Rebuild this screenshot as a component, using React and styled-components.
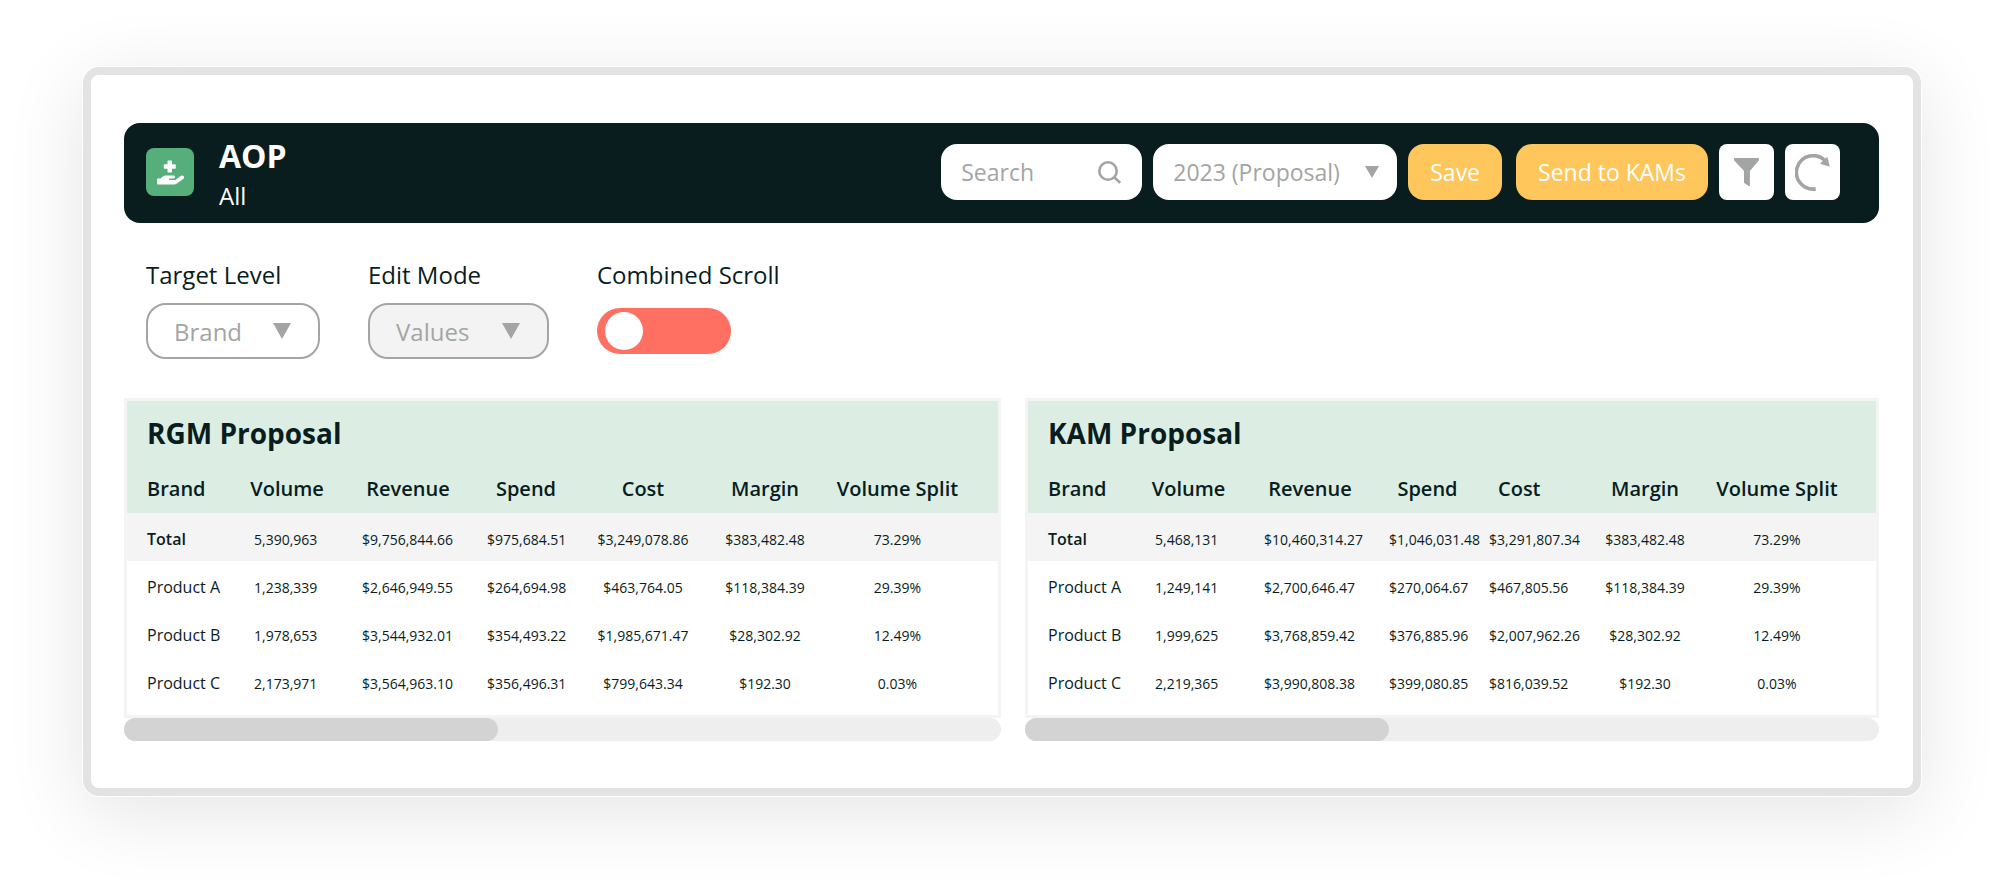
import React from "react";
import styled, { createGlobalStyle } from "styled-components";
import { FaHandHoldingMedical } from "react-icons/fa";

const GlobalStyle = createGlobalStyle`
  * {
    box-sizing: border-box;
  }

  body {
    margin: 0;
    background: #fff;
    color: #091d1e;
    font-family: "Open Sans", "Noto Sans", sans-serif;
  }

  button, input, select {
    font: inherit;
  }
`;

const Page = styled.div`
  padding: 67px 79px 95px 83px;
`;

const Frame = styled.main`
  padding: 48px 34px 47px 33px;
  border: 8px solid #e3e3e3;
  border-radius: 16px;
  background: #fff;
  box-shadow: 0 0 0 1px #fff, 0 16px 80px rgba(0, 0, 0, 0.11);
`;

const Header = styled.header`
  display: flex;
  align-items: center;
  height: 100px;
  padding: 0 39px 2px 22px;
  border-radius: 16px;
  background: #091d1e;
`;

const Logo = styled.div`
  display: grid;
  place-items: center;
  width: 48px;
  height: 48px;
  margin-right: 25px;
  border-radius: 8px;
  background: #56ae7b;
  color: #fff;
  font-size: 27px;
`;

const Heading = styled.div`
  margin-right: auto;
  padding-top: 6px;
  color: #fff;
`;

const Title = styled.h1`
  margin: 0;
  font-size: 32px;
  font-weight: 700;
  line-height: 42px;
`;

const Subtitle = styled.p`
  margin: 0;
  font-size: 24px;
  line-height: 38px;
`;

const Actions = styled.div`
  display: flex;
  align-items: center;
  gap: 11px;
`;

const SearchBox = styled.label`
  display: flex;
  align-items: center;
  width: 201px;
  height: 56px;
  padding: 0 21px 0 20px;
  border-radius: 16px;
  background: #fff;
  color: #a3a5a4;
`;

const SearchInput = styled.input`
  flex: 1;
  min-width: 0;
  padding: 0;
  border: 0;
  outline: 0;
  background: none;
  color: #a3a5a4;
  font-size: 23px;

  &::placeholder {
    color: #a3a5a4;
    opacity: 1;
  }
`;

const SelectBox = styled.div`
  display: grid;
  align-items: center;
  width: ${(props) => props.$width}px;
  height: 56px;
  color: #a3a5a4;

  > * {
    grid-area: 1 / 1;
  }

  svg {
    justify-self: end;
    margin-right: ${(props) => props.$arrowGap}px;
    pointer-events: none;
  }
`;

const Select = styled.select`
  appearance: none;
  width: 100%;
  height: 100%;
  padding: 0 0 0 ${(props) => (props.$outlined ? 26 : 20)}px;
  border: ${(props) => (props.$outlined ? "2px solid #a3a5a4" : "0")};
  border-radius: ${(props) => (props.$outlined ? 20 : 16)}px;
  background: ${(props) => (props.$filled ? "#f3f3f3" : "#fff")};
  color: #a3a5a4;
  font-size: ${(props) => (props.$outlined ? 24 : 23)}px;
`;

const Button = styled.button`
  height: 56px;
  padding: 0 22px;
  border: 0;
  border-radius: 16px;
  background: #fec65b;
  color: #fff;
  font-size: 23px;

  & + & {
    margin-left: 3px;
  }
`;

const IconButton = styled.button`
  display: grid;
  place-items: center;
  width: 55px;
  height: 56px;
  padding: 0;
  border: 0;
  border-radius: 8px;
  background: #fff;
  color: #a3a5a4;
`;

const Filters = styled.section`
  display: flex;
  gap: 48px;
  padding: 34px 22px 39px;
`;

const Field = styled.div`
  display: flex;
  flex-direction: column;
  gap: 10px;
`;

const FieldLabel = styled.label`
  font-size: 24px;
  line-height: 36px;
`;

const Toggle = styled.input`
  appearance: none;
  display: flex;
  align-items: center;
  width: 134px;
  height: 46px;
  margin: 5px 0;
  padding: 0 8px;
  border-radius: 23px;
  background: #ff7063;

  &::before {
    content: "";
    width: 38px;
    height: 38px;
    border-radius: 50%;
    background: #fff;
  }

  &:checked {
    justify-content: flex-end;
  }
`;

const Panels = styled.div`
  display: grid;
  grid-template-columns: 877fr 854fr;
  gap: 24px;
`;

const Card = styled.div`
  border: 3px solid #f4f4f4;
  background: #fff;
`;

const CardTitle = styled.h2`
  margin: 0;
  padding: 13px 20px 1px;
  background: #dceee3;
  font-size: 28px;
  font-weight: 700;
  line-height: 38px;
`;

const Table = styled.table`
  width: 100%;
  table-layout: fixed;
  border-collapse: collapse;
  margin-bottom: 10px;
  white-space: nowrap;
`;

const HeadCell = styled.th`
  height: 60px;
  padding: 10px ${(props) => props.$end || 0}px 0 ${(props) => props.$start || 0}px;
  background: #dceee3;
  font-size: 20px;
  font-weight: 600;
  text-align: ${(props) => (props.$start ? "left" : "center")};
`;

const Row = styled.tr`
  height: 48px;
  background: ${(props) => (props.$total ? "#f4f4f4" : "#fff")};
`;

const RowName = styled.th`
  padding: 3px 0 0 20px;
  font-size: 16px;
  font-weight: ${(props) => (props.$total ? 600 : 400)};
  text-align: left;
`;

const Cell = styled.td`
  padding: 5px ${(props) => props.$end || 0}px 0 ${(props) => props.$start || 0}px;
  font-size: 14px;
  text-align: ${(props) => (props.$start ? "left" : "center")};
`;

const ScrollTrack = styled.div`
  height: 23px;
  border-radius: 12px;
  background: #eee;
`;

const ScrollThumb = styled.div`
  height: 100%;
  border-radius: 12px;
  background: #d3d3d3;
`;

const Arrow = ({ size }) => (
  <svg width={size} height={size - 2} viewBox="0 0 18 16" preserveAspectRatio="none" aria-hidden="true">
    <path d="M0 0h18L9 16z" fill="currentColor" />
  </svg>
);

const SearchIcon = () => (
  <svg width="23" height="23" viewBox="0 0 23 23" fill="none" stroke="currentColor" strokeWidth="2.6" aria-hidden="true">
    <circle cx="10" cy="10" r="8.700" />
    <path d="M16.200 16.200l6 5.600" />
  </svg>
);

const FunnelIcon = () => (
  <svg width="25" height="28" viewBox="0 0 25 28" fill="currentColor" aria-hidden="true">
    <path d="M.8 0h23.400q.8 0 .8.800v1.400L15.900 13v15h-1.200L10 24.800V13L0 2.200V.8Q0 0 .8 0z" />
  </svg>
);

const RefreshIcon = () => (
  <svg width="35" height="37" viewBox="0 0 35 37" fill="none" aria-hidden="true">
    <path d="M20.700 34.900A16.700 16.700 0 1 1 30.200 6.800" stroke="currentColor" strokeWidth="3.600" />
    <path d="M32.300 2.800l2.500 10-9.800-3z" fill="currentColor" />
  </svg>
);

// start = left inset of the values, headStart = left inset of the column name
const rgm = {
  title: "RGM Proposal",
  scroll: 374 / 877,
  columns: [
    { label: "Brand", width: 100, headStart: 20 },
    { label: "Volume", width: 120, start: 27 },
    { label: "Revenue", width: 122, start: 15 },
    { label: "Spend", width: 114, start: 18 },
    { label: "Cost", width: 120 },
    { label: "Margin", width: 124 },
    { label: "Volume Split", width: 171, end: 30 },
  ],
  rows: [
    ["Total", "5,390,963", "$9,756,844.66", "$975,684.51", "$3,249,078.86", "$383,482.48", "73.29%"],
    ["Product A", "1,238,339", "$2,646,949.55", "$264,694.98", "$463,764.05", "$118,384.39", "29.39%"],
    ["Product B", "1,978,653", "$3,544,932.01", "$354,493.22", "$1,985,671.47", "$28,302.92", "12.49%"],
    ["Product C", "2,173,971", "$3,564,963.10", "$356,496.31", "$799,643.34", "$192.30", "0.03%"],
  ],
};

const kam = {
  title: "KAM Proposal",
  scroll: 364 / 854,
  columns: [
    { label: "Brand", width: 100, headStart: 20 },
    { label: "Volume", width: 121, start: 27 },
    { label: "Revenue", width: 122, start: 15 },
    { label: "Spend", width: 113, start: 18 },
    { label: "Cost", width: 104, start: 5, headStart: 14 },
    { label: "Margin", width: 114 },
    { label: "Volume Split", width: 174, end: 24 },
  ],
  rows: [
    ["Total", "5,468,131", "$10,460,314.27", "$1,046,031.48", "$3,291,807.34", "$383,482.48", "73.29%"],
    ["Product A", "1,249,141", "$2,700,646.47", "$270,064.67", "$467,805.56", "$118,384.39", "29.39%"],
    ["Product B", "1,999,625", "$3,768,859.42", "$376,885.96", "$2,007,962.26", "$28,302.92", "12.49%"],
    ["Product C", "2,219,365", "$3,990,808.38", "$399,080.85", "$816,039.52", "$192.30", "0.03%"],
  ],
};

const ProposalPanel = ({ title, columns, rows, scroll }) => (
  <section>
    <Card>
      <CardTitle>{title}</CardTitle>
      <Table aria-label={title}>
        <colgroup>
          {columns.map((col) => (
            <col key={col.label} width={col.width} />
          ))}
        </colgroup>
        <thead>
          <tr>
            {columns.map((col) => (
              <HeadCell key={col.label} scope="col" $start={col.headStart} $end={col.end}>
                {col.label}
              </HeadCell>
            ))}
          </tr>
        </thead>
        <tbody>
          {rows.map(([name, ...values], index) => (
            <Row key={name} $total={index === 0}>
              <RowName scope="row" $total={index === 0}>
                {name}
              </RowName>
              {values.map((value, i) => (
                <Cell key={columns[i + 1].label} $start={columns[i + 1].start} $end={columns[i + 1].end}>
                  {value}
                </Cell>
              ))}
            </Row>
          ))}
        </tbody>
      </Table>
    </Card>
    <ScrollTrack>
      <ScrollThumb style={{ width: `${scroll * 100}%` }} />
    </ScrollTrack>
  </section>
);

const App = () => {
  return (
    <Page>
      <GlobalStyle />
      <Frame>
        <Header>
          <Logo>
            <FaHandHoldingMedical />
          </Logo>
          <Heading>
            <Title>AOP</Title>
            <Subtitle>All</Subtitle>
          </Heading>
          <Actions>
            <SearchBox>
              <SearchInput type="text" placeholder="Search" aria-label="Search" />
              <SearchIcon />
            </SearchBox>
            <SelectBox $width={244} $arrowGap={18}>
              <Select aria-label="Plan">
                <option>2023 (Proposal)</option>
              </Select>
              <Arrow size={14} />
            </SelectBox>
            <Button type="button">Save</Button>
            <Button type="button">Send to KAMs</Button>
            <IconButton type="button" aria-label="Filter">
              <FunnelIcon />
            </IconButton>
            <IconButton type="button" aria-label="Refresh">
              <RefreshIcon />
            </IconButton>
          </Actions>
        </Header>

        <Filters>
          <Field>
            <FieldLabel htmlFor="target-level">Target Level</FieldLabel>
            <SelectBox $width={174} $arrowGap={29}>
              <Select id="target-level" $outlined>
                <option>Brand</option>
              </Select>
              <Arrow size={18} />
            </SelectBox>
          </Field>
          <Field>
            <FieldLabel htmlFor="edit-mode">Edit Mode</FieldLabel>
            <SelectBox $width={181} $arrowGap={29}>
              <Select id="edit-mode" $outlined $filled>
                <option>Values</option>
              </Select>
              <Arrow size={18} />
            </SelectBox>
          </Field>
          <Field>
            <FieldLabel htmlFor="combined-scroll">Combined Scroll</FieldLabel>
            <Toggle type="checkbox" role="switch" id="combined-scroll" />
          </Field>
        </Filters>

        <Panels>
          <ProposalPanel {...rgm} />
          <ProposalPanel {...kam} />
        </Panels>
      </Frame>
    </Page>
  );
};

export default App;
